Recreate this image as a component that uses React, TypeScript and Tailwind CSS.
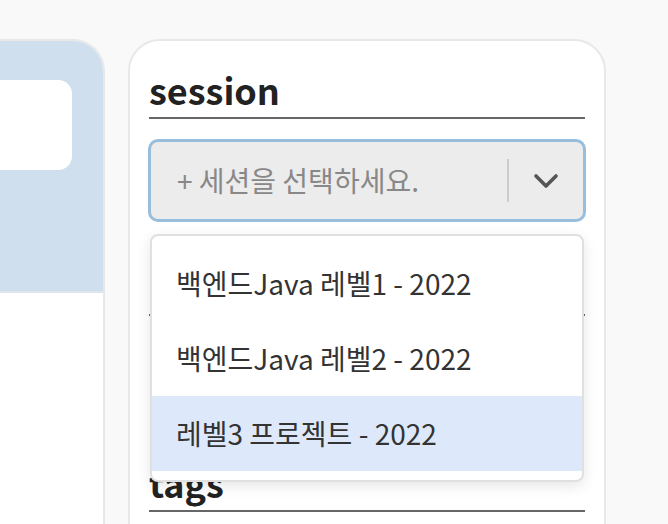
import React from "react";

const font = { fontFamily: '"Noto Sans CJK KR", "Noto Sans", sans-serif' };

const options = ["백엔드Java 레벨1 - 2022", "백엔드Java 레벨2 - 2022", "레벨3 프로젝트 - 2022"];

const App: React.FC = () => {
  return (
    <div
      className="h-[524px] w-[668px] overflow-hidden bg-[#f9f9f9] pt-[39px] flex gap-[23px]"
      style={font}
    >
      {/* left card */}
      <div className="w-[105px] h-[600px] shrink-0 bg-white border-2 border-l-0 border-[#e8e8e8] rounded-tr-[32px] overflow-hidden">
        <div className="h-[252px] bg-[#cfdfee] border-b-2 border-[#dde6ef] pt-[39px]">
          <div className="w-[72px] h-[90px] bg-white rounded-r-[14px]" />
        </div>
      </div>

      {/* right card */}
      <div className="w-[478px] h-[600px] shrink-0 bg-white border-2 border-[#e8e8e8] rounded-[32px] px-[19px] pt-[23px]">
        <h2 className="text-[36px] font-bold text-[#222] leading-[50px] border-b-2 border-[#666] pb-[3px]">
          session
        </h2>
        <div className="relative mt-[20px] -mx-[1px]">
          <div className="h-[83px] bg-[#ececec] border-[3px] border-[#98bedc] rounded-[10px] flex items-center pl-[26px]">
            <span className="flex-1 text-[28px] text-[#888] leading-none pb-[2px]">+ 세션을 선택하세요.</span>
            <div className="w-[2px] h-[43px] bg-[#cccccc]" />
            <div className="w-[74px] flex justify-center">
              <svg width="26" height="16" viewBox="0 0 26 16">
                <polyline
                  points="3,3 13,13 23,3"
                  fill="none"
                  stroke="#555"
                  strokeWidth="3.6"
                  strokeLinecap="round"
                  strokeLinejoin="round"
                />
              </svg>
            </div>
          </div>

          {/* dropdown menu */}
          <div className="absolute left-[2px] right-[2px] top-[95px] z-10 bg-white border-2 border-[#e0e0e0] rounded-[8px] shadow-[0_4px_14px_rgba(0,0,0,0.10)] pt-[10px] pb-[9px] overflow-hidden">
            {options.map((o, i) => (
              <div
                key={o}
                className={
                  "h-[75px] flex items-center pl-[24px] text-[28px] text-[#333] leading-none pb-[2px] " +
                  (i === 2 ? "bg-[#dde9fa]" : "")
                }
              >
                {o}
              </div>
            ))}
          </div>
        </div>

        <h2 className="mt-[39px] text-[36px] font-bold text-[#222] leading-[50px] border-b-2 border-[#666] pb-[3px]">
          mission
        </h2>
        <div className="mt-[21px] h-[82px]" />

        <h2 className="mt-[38px] text-[36px] font-bold text-[#222] leading-[50px] border-b-2 border-[#666] pb-[3px]">
          tags
        </h2>
      </div>
    </div>
  );
};

export default App;
